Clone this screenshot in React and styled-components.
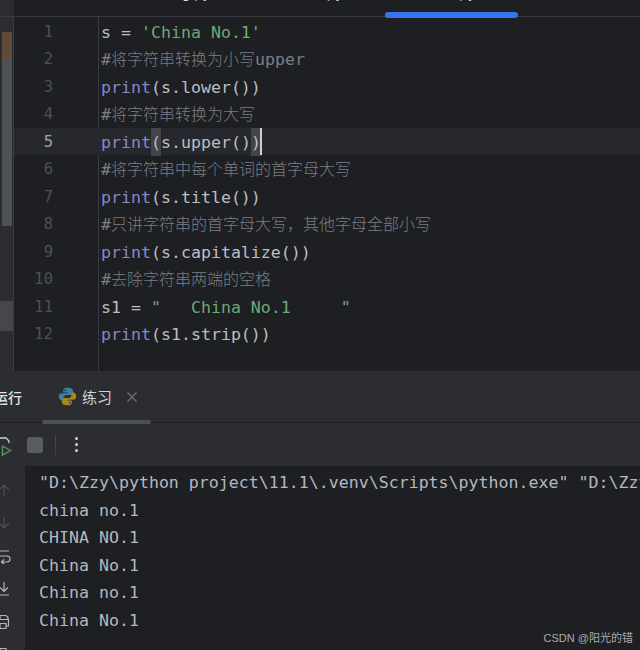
import React from 'react'
import styled, { createGlobalStyle } from 'styled-components'

const GlobalStyle = createGlobalStyle`
  html, body {
    margin: 0;
    padding: 0;
    background: #1e1f22;
  }
`

const codeLines = [
  [['plain', 's = '], ['str', "'China No.1'"]],
  [['com', '#'], ['cjk', '将字符串转换为小写'], ['com', 'upper']],
  [['fn', 'print'], ['plain', '(s.lower())']],
  [['com', '#'], ['cjk', '将字符串转换为大写']],
  [['fn', 'print'], ['match', '('], ['plain', 's.upper()'], ['match', ')'], ['caret', '']],
  [['com', '#'], ['cjk', '将字符串中每个单词的首字母大写']],
  [['fn', 'print'], ['plain', '(s.title())']],
  [['com', '#'], ['cjk', '只讲字符串的首字母大写，其他字母全部小写']],
  [['fn', 'print'], ['plain', '(s.capitalize())']],
  [['com', '#'], ['cjk', '去除字符串两端的空格']],
  [['plain', 's1 = '], ['str', '"   China No.1     "']],
  [['fn', 'print'], ['plain', '(s1.strip())']],
]

const outputLines = [
  '"D:\\Zzy\\python project\\11.1\\.venv\\Scripts\\python.exe" "D:\\Zzy\\python project\\11.1\\练习.py"',
  'china no.1',
  'CHINA NO.1',
  'China No.1',
  'China no.1',
  'China No.1',
]

function Token({ kind, text }) {
  if (kind === 'str') return <Str>{text}</Str>
  if (kind === 'com') return <Comment>{text}</Comment>
  if (kind === 'cjk') return <CjkComment>{text}</CjkComment>
  if (kind === 'fn') return <Builtin>{text}</Builtin>
  if (kind === 'match') return <BraceMatch>{text}</BraceMatch>
  if (kind === 'caret') return <Caret />
  return <span>{text}</span>
}

function PythonLogo() {
  return (
    <svg width="19" height="19" viewBox="0 0 24 24">
      <path fill="#3d7ea6" d="M11.8 1C7 1 6.6 3 6.6 4.5V7h5.5v1H4.5C2.4 8 1 9.8 1 12.4c0 2.700 1.400 4.600 3.500 4.600H7v-3c0-2.200 1.800-4 4-4h5.200c1.500 0 2.800-1.300 2.800-2.800V4.500C19 2.500 16.800 1 11.800 1zM9 3a1.100 1.100 0 1 1 0 2.200A1.100 1.100 0 0 1 9 3z" />
      <path fill="#a8871f" d="M12.200 23c4.800 0 5.200-2 5.200-3.500V17h-5.500v-1h7.600c2.100 0 3.500-1.800 3.500-4.400 0-2.700-1.400-4.600-3.500-4.600H17v3c0 2.200-1.800 4-4 4H7.800C6.300 14 5 15.300 5 16.800v2.700C5 21.500 7.200 23 12.200 23zM15 21a1.100 1.100 0 1 1 0-2.200 1.100 1.100 0 0 1 0 2.200z" />
    </svg>
  )
}

function SideIcon({ dim, children }) {
  return (
    <SideSvg $dim={dim} viewBox="0 0 16 16" width="16" height="16">
      {children}
    </SideSvg>
  )
}

function App() {
  return (
    <Page>
      <GlobalStyle />
      <TabBar>
        <Corner />
        <Tab><TabLabel>string.py</TabLabel></Tab>
        <Tab><TabLabel>list.py</TabLabel></Tab>
        <Tab $active><TabLabel>练习.py</TabLabel></Tab>
      </TabBar>

      <Editor>
        <Stripe>
          <ScrollThumb />
          <StripeMark />
        </Stripe>
        <Code>
          {codeLines.map((tokens, i) => (
            <Line key={i} $current={i === 4}>
              <LineNumber $current={i === 4}>{i + 1}</LineNumber>
              <LineText>
                {tokens.map(([kind, text], j) => (
                  <Token key={j} kind={kind} text={text} />
                ))}
              </LineText>
            </Line>
          ))}
        </Code>
      </Editor>

      <RunTabs>
        <RunTitle>运行</RunTitle>
        <RunTab>
          <PythonLogo />
          <RunTabName>练习</RunTabName>
          <svg width="12" height="12" viewBox="0 0 12 12">
            <path d="M1.500 1.500l9 9M10.500 1.500l-9 9" stroke="#6f737a" strokeWidth="1.200" />
          </svg>
        </RunTab>
      </RunTabs>

      <Toolbar>
        <RerunIcon viewBox="0 0 16 24" width="16" height="24">
          <path d="M0 5h10l3 3v2" fill="none" stroke="#ced0d6" strokeWidth="1.300" />
          <path d="M6.500 13l8 4.500-8 4.500z" fill="none" stroke="#57965c" strokeWidth="1.400" />
        </RerunIcon>
        <StopButton />
        <ToolSeparator />
        <Kebab>
          <i />
          <i />
          <i />
        </Kebab>
      </Toolbar>

      <Console>
        <ConsoleSide>
          <SideIcon dim>
            <path d="M8 14V3M3 8l5-5 5 5" />
          </SideIcon>
          <SideIcon dim>
            <path d="M8 2v11M3 8l5 5 5-5" />
          </SideIcon>
          <SideIcon>
            <path d="M0 3h13M0 8h11a2.500 2.500 0 0 1 0 6H6M8 11.500L5.500 14 8 16M0 13h3" />
          </SideIcon>
          <SideIcon>
            <path d="M8 1v9M4 6.500L8 10.500l4-4M0 14h13" />
          </SideIcon>
          <SideIcon>
            <path d="M4 5V1.500h6L12 3.500V5M1.500 12V5.500h11V12H10M4 9.500h6v5H4zM0 12h3" />
          </SideIcon>
          <SideIcon>
            <path d="M1 4h12M4 4V1.500h6V4M2.500 4v10h9V4" />
          </SideIcon>
        </ConsoleSide>
        <Output>
          {outputLines.map((text, i) => (
            <OutputLine key={i}>{text}</OutputLine>
          ))}
        </Output>
      </Console>

      <Watermark>CSDN @阳光的错</Watermark>
    </Page>
  )
}

export default App

const mono = `"DejaVu Sans Mono", "Noto Sans CJK SC", monospace`

const Page = styled.div`
  position: relative;
  width: 640px;
  height: 650px;
  overflow: hidden;
  display: flex;
  flex-direction: column;
  background: #1e1f22;
  color: #bcbec4;
  font-family: ${mono};
`

const TabBar = styled.div`
  position: relative;
  z-index: 2;
  flex: none;
  height: 16px;
  display: flex;
  border-bottom: 1px solid #393b40;
`

const Corner = styled.div`
  width: 120px;
  flex: none;
  box-shadow: inset 14px 0 0 #2b2d30;
`

const Tab = styled.div`
  position: relative;
  flex: none;
  box-sizing: border-box;
  width: 132.500px;
  height: 16px;
  padding-right: 42px;
  display: flex;
  justify-content: flex-end;
  &::after {
    content: '';
    display: ${p => (p.$active ? 'block' : 'none')};
    position: absolute;
    left: 0;
    right: 0;
    top: 12px;
    height: 6px;
    border-radius: 3px;
    background: #3574f0;
  }
`

const TabLabel = styled.span`
  margin-top: -17px;
  font: 14px/20px "Inter", "Noto Sans CJK SC", sans-serif;
  color: #dfe1e5;
`

const Editor = styled.div`
  position: relative;
  flex: none;
  height: 354px;
  display: flex;
  background: #1e1f22;
`

const Stripe = styled.div`
  flex: none;
  width: 14px;
  box-sizing: border-box;
  padding: 15px 2px 0;
  background: #2b2d30;
  border-right: 1px solid #393b40;
`

const ScrollThumb = styled.div`
  width: 10px;
  height: 194px;
  background: linear-gradient(#5f4b36 0 28px, #4e5157 28px);
`

const StripeMark = styled.div`
  margin: 75px -2px 0;
  height: 30px;
  background: #45474c;
`

const Code = styled.div`
  flex: 1;
  padding-top: 0.500px;
  min-width: 0;
  background: linear-gradient(to right, transparent 84px, #393b40 84px, #393b40 85px, transparent 85px);
`

const Line = styled.div`
  display: flex;
  height: 27.500px;
  line-height: 27.500px;
  background: ${p => (p.$current ? '#26282e' : 'transparent')};
`

const LineNumber = styled.div`
  flex: none;
  box-sizing: border-box;
  width: 39px;
  padding-top: 1px;
  text-align: right;
  font-size: 15.500px;
  color: ${p => (p.$current ? '#a1a3ab' : '#4b5059')};
`

const LineText = styled.div`
  margin-left: 48px;
  padding-top: 1px;
  font-size: 16.600px;
  white-space: pre;
`

const Str = styled.span`
  color: #6aab73;
`

const Comment = styled.span`
  color: #7a7e85;
`

const CjkComment = styled.span`
  color: #7a7e85;
  font-family: "Noto Sans CJK SC", sans-serif;
  font-size: 16px;
  font-weight: 300;
  line-height: 1;
`

const Builtin = styled.span`
  color: #8888c6;
`

const BraceMatch = styled.span`
  display: inline-block;
  margin-top: -1px;
  padding-top: 1px;
  vertical-align: top;
  background: #43454a;
`

const Caret = styled.span`
  display: inline-block;
  width: 2px;
  height: 27.500px;
  margin: -1px 0 0 -1px;
  vertical-align: top;
  background: #ced0d6;
`

const RunTabs = styled.div`
  flex: none;
  box-sizing: border-box;
  height: 52px;
  display: flex;
  align-items: center;
  background: #2b2d30;
  border-bottom: 1px solid #1e1f22;
  font-family: "Noto Sans CJK SC", sans-serif;
  font-size: 14px;
`

const RunTitle = styled.div`
  flex: none;
  width: 28px;
  margin-left: -6px;
  color: #dfe1e5;
  font-weight: 500;
`

const RunTab = styled.div`
  position: relative;
  display: flex;
  align-items: center;
  box-sizing: border-box;
  height: 100%;
  margin-left: 20px;
  width: 109px;
  padding-left: 16px;
  &::after {
    content: '';
    position: absolute;
    left: 0;
    right: 0;
    bottom: -2px;
    height: 4px;
    border-radius: 2px;
    background: #4e5157;
  }
`

const RunTabName = styled.span`
  margin: 0 14px 0 5px;
  color: #ced0d6;
  font-size: 15px;
`

const Toolbar = styled.div`
  flex: none;
  height: 43px;
  display: flex;
  align-items: center;
  background: #2b2d30;
`

const RerunIcon = styled.svg`
  flex: none;
  margin-left: -4px;
`

const StopButton = styled.div`
  width: 16px;
  height: 16px;
  margin-left: 15px;
  border-radius: 3px;
  background: #5a5d63;
`

const ToolSeparator = styled.div`
  width: 1px;
  height: 20px;
  margin-left: 12px;
  background: #43454a;
`

const Kebab = styled.div`
  margin-left: 19px;
  display: flex;
  flex-direction: column;
  gap: 3px;
  i {
    display: block;
    width: 3px;
    height: 3px;
    border-radius: 50%;
    background: #ced0d6;
  }
`

const Console = styled.div`
  flex: 1;
  display: flex;
  min-height: 0;
`

const ConsoleSide = styled.div`
  flex: none;
  width: 25px;
  box-sizing: border-box;
  padding: 16px 0 0 0;
  display: flex;
  flex-direction: column;
  gap: 17px;
  background: #2b2d30;
  overflow: hidden;
`

const SideSvg = styled.svg`
  flex: none;
  margin-left: -4px;
  fill: none;
  stroke: ${p => (p.$dim ? '#4e5157' : '#b4b6bc')};
  stroke-width: 1.200;
`

const Output = styled.div`
  flex: 1;
  padding: 3px 0 0 14px;
  min-width: 0;
  overflow: hidden;
`

const OutputLine = styled.div`
  height: 27.500px;
  line-height: 27.500px;
  font-size: 16.600px;
  white-space: pre;
  color: #b4b8bf;
`

const Watermark = styled.div`
  position: absolute;
  right: 7px;
  bottom: 5px;
  font: 11px "Liberation Sans", "Noto Sans CJK SC", sans-serif;
  color: #a9abb0;
`
